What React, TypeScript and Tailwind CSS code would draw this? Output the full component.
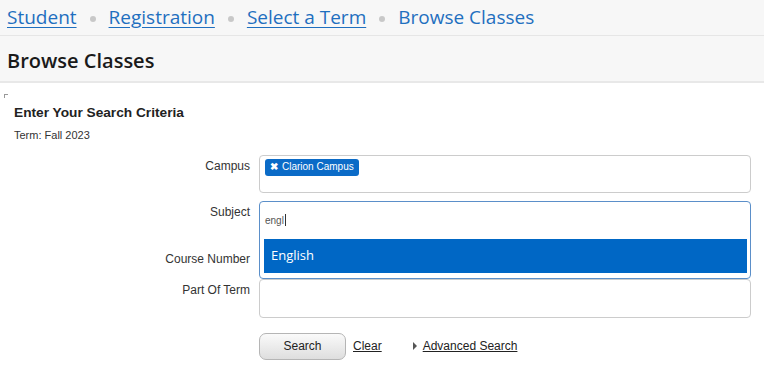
import React from "react";

const crumbs = ["Student", "Registration", "Select a Term"];

function Label({ children, className = "" }: { children: React.ReactNode; className?: string }) {
  return <div className={`w-[259px] shrink-0 pr-[9px] text-right text-[12px] text-[#333] ${className}`}>{children}</div>;
}

export default function App() {
  return (
    <div className="h-[376px] w-[764px] overflow-hidden bg-white">
      {/* breadcrumbs */}
      <div className="flex h-[36px] items-center border-b border-[#e6e6e6] bg-[#f7f7f7] pl-[7px] font-['Open_Sans',sans-serif] text-[19px] leading-none">
        {crumbs.map((c) => (
          <React.Fragment key={c}>
            <a href="#" className="text-[#1f6fbf] underline underline-offset-[3px]">
              {c}
            </a>
            <span className="mx-[13px] mt-[2px] h-[6px] w-[6px] rounded-full bg-[#c8c8c8]" />
          </React.Fragment>
        ))}
        <span className="text-[#1f6fbf]">Browse Classes</span>
      </div>

      {/* page title */}
      <div className="flex h-[47px] items-center border-b-2 border-[#e8e8e8] bg-[#f7f7f7] pl-[7px] pt-[5px] font-['Open_Sans',sans-serif] text-[20px] font-semibold text-[#1a1a1a]">
        Browse Classes
      </div>

      <div className="relative font-['Liberation_Sans',Arial,sans-serif]">
        <div className="absolute left-[4px] top-[11px] h-[4px] w-[4px] border-l border-t border-[#999]" />

        <div className="pl-[14px] pt-[23px]">
          <h2 className="text-[13.7px] font-bold leading-none text-[#222]">Enter Your Search Criteria</h2>
          <p className="mt-[10px] text-[11px] leading-none text-[#333]">Term: Fall 2023</p>
        </div>

        <div className="mt-[14px] flex flex-col">
          {/* campus */}
          <div className="flex">
            <Label className="pt-[2px]">Campus</Label>
            <div className="flex h-[38px] w-[492px] items-start rounded-[4px] border border-[#cccccc] px-[5px] pt-[3px]">
              <span className="inline-flex h-[17px] items-center gap-[4px] rounded-[3px] bg-[#0b6bc7] px-[5px] text-[10px] leading-none text-white">
                <span className="text-[9.5px] font-bold">✖</span>
                Clarion Campus
              </span>
            </div>
          </div>

          {/* subject */}
          <div className="mt-[8px] flex">
            <div className="flex w-[259px] shrink-0 flex-col">
              <Label className="pt-[2px]">Subject</Label>
              <Label className="pt-[29px]">Course Number</Label>
            </div>
            <div className="h-[78px] w-[492px] rounded-[4px] border border-[#5b8fc9] pl-[4px] pr-[3px]">
              <div className="flex h-[37px] items-center pl-[1px] text-[10px] text-[#555]">
                engl<span className="ml-[1px] h-[12px] w-px bg-[#333]" />
              </div>
              <div className="flex h-[34px] items-center bg-[#0067c5] pl-[7px] font-['Open_Sans',sans-serif] text-[13px] text-white">
                English
              </div>
            </div>
          </div>

          {/* part of term */}
          <div className="flex">
            <Label className="pt-[2px]">Part Of Term</Label>
            <div className="h-[39px] w-[492px] rounded-[4px] border border-[#cccccc]" />
          </div>

          {/* actions */}
          <div className="mt-[15px] flex items-center pl-[259px]">
            <button className="h-[27px] w-[87px] rounded-[7px] border border-[#b5b5b5] bg-gradient-to-b from-[#fafafa] to-[#dedede] text-[12px] text-[#222]">
              Search
            </button>
            <a href="#" className="ml-[7px] text-[12px] text-[#222] underline">
              Clear
            </a>
            <span className="ml-[31px] mr-[6px] h-0 w-0 border-y-[4px] border-l-[4px] border-y-transparent border-l-[#555]" />
            <a href="#" className="text-[12px] text-[#222] underline">
              Advanced Search
            </a>
          </div>
        </div>
      </div>
    </div>
  );
}
